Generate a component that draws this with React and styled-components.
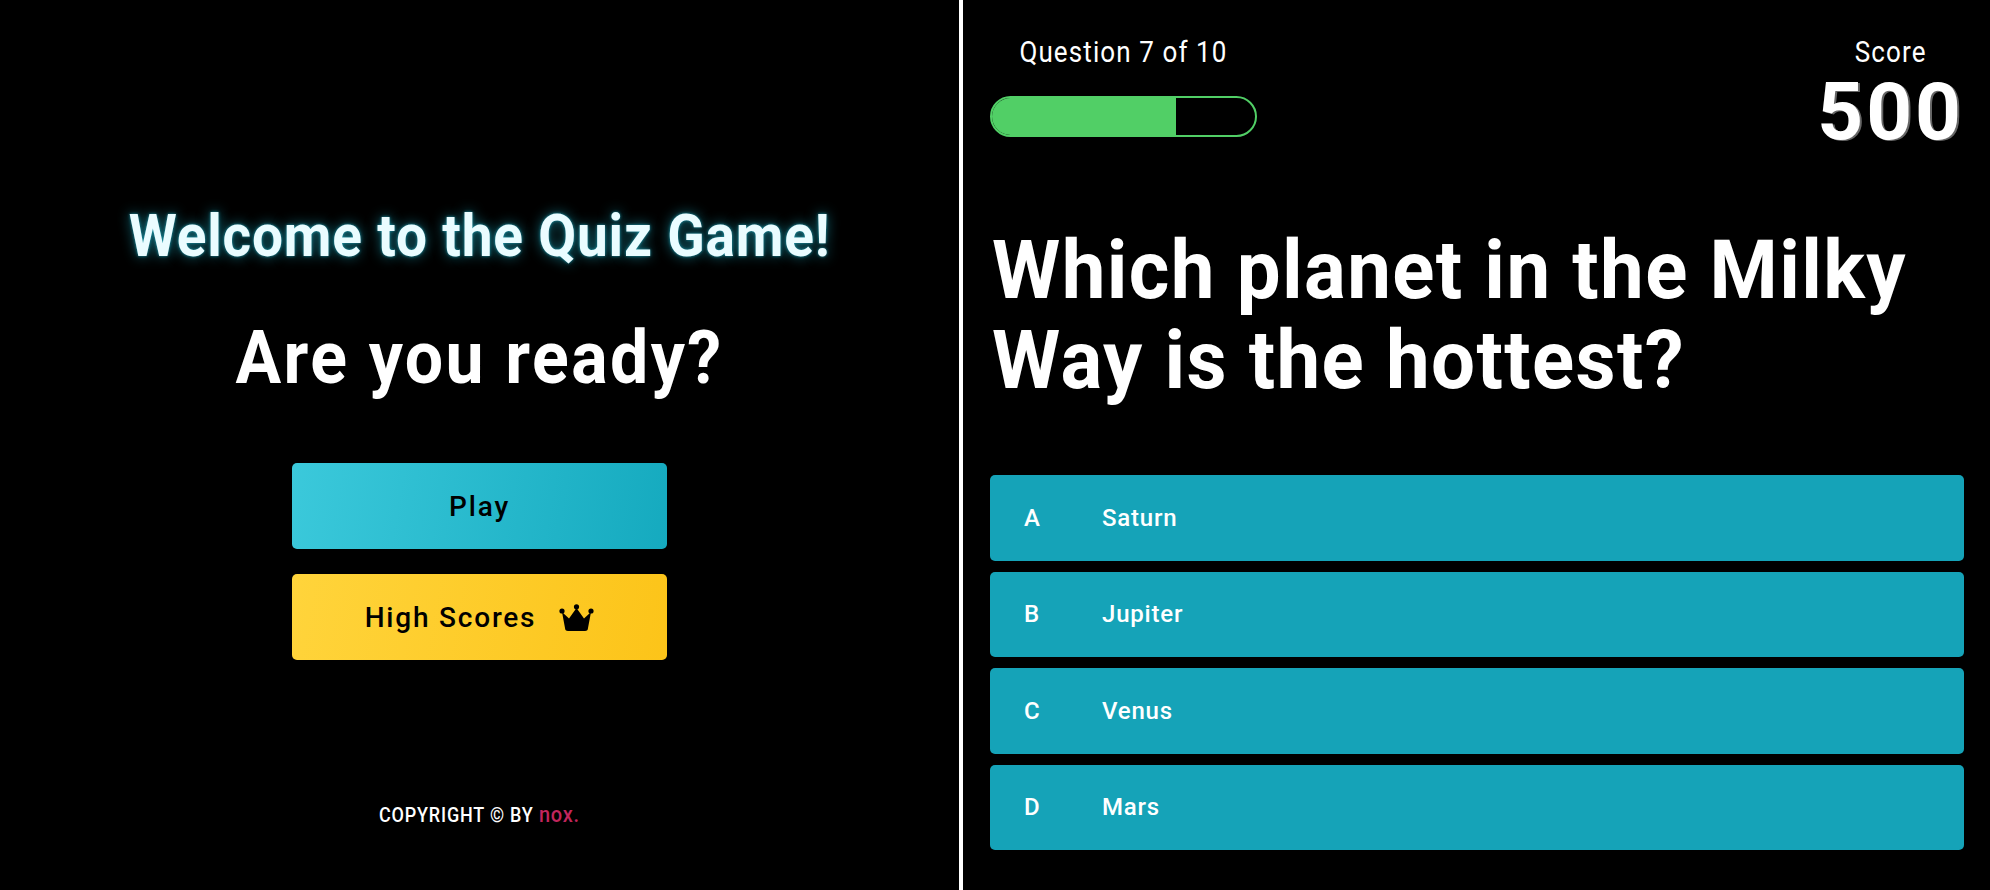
import React from "react";
import styled, { createGlobalStyle } from "styled-components";

const GlobalStyle = createGlobalStyle`
  * {
    box-sizing: border-box;
  }
  body {
    margin: 0;
    background: #000;
    color: #fff;
    font-family: Roboto, "Liberation Sans", sans-serif;
  }
`;

const Page = styled.div`
  display: grid;
  grid-template-columns: 959px 4px 1fr;
  width: 1990px;
  height: 890px;
  overflow: hidden;
`;

const Divider = styled.div`
  background: #fff;
`;

const Home = styled.section`
  display: flex;
  flex-direction: column;
  align-items: center;
  padding-top: 206px;
`;

const Welcome = styled.h1`
  margin: 0;
  font-size: 55px;
  line-height: 60px;
  font-weight: 700;
  letter-spacing: 0.8px;
  color: #eafcff;
  text-shadow: 0 0 3px rgba(34, 184, 207, 0.8), 0 0 12px rgba(34, 184, 207, 0.6);
  transform: scaleY(1.074);
`;

const Ready = styled.h2`
  margin: 52px 0 0;
  font-size: 68px;
  line-height: 80px;
  font-weight: 700;
  letter-spacing: 2.4px;
  transform: scaleY(1.096);
`;

const Menu = styled.div`
  display: flex;
  flex-direction: column;
  gap: 25px;
  width: 375px;
  margin-top: 65px;
`;

const MenuButton = styled.button`
  display: flex;
  align-items: center;
  justify-content: center;
  gap: 23px;
  height: 86px;
  border: 0;
  border-radius: 5px;
  color: #000;
  font-family: inherit;
  font-size: 28px;
  font-weight: 500;
  letter-spacing: 1.8px;
  background: ${(props) =>
    props.$gold
      ? "linear-gradient(100deg, #ffd43b, #fcc419)"
      : "linear-gradient(100deg, #3bc9db, #15aabf)"};
`;

const Crown = styled.svg`
  width: 35px;
  height: 27px;
  fill: #000;
`;

const Copyright = styled.footer`
  margin-top: 142px;
  font-size: 18px;
  line-height: 24px;
  font-weight: 500;
  letter-spacing: 0.8px;
  transform: scaleY(1.1);
`;

const Brand = styled.span`
  color: #c2255c;
  font-size: 20px;
`;

const Quiz = styled.section`
  display: flex;
  flex-direction: column;
  padding: 32px 26px 0 27px;
`;

const Header = styled.header`
  display: flex;
  justify-content: space-between;
`;

const Progress = styled.div`
  display: flex;
  flex-direction: column;
  align-items: center;
  width: 267px;
`;

const HeaderLabel = styled.div`
  margin: 2px 0;
  font-size: 26px;
  line-height: 36px;
  letter-spacing: 1.1px;
  transform: scaleY(1.13);
`;

const Track = styled.div`
  width: 100%;
  height: 41px;
  margin-top: 24px;
  border: 2px solid #51cf66;
  border-radius: 21px;
  overflow: hidden;
`;

const Fill = styled.div`
  height: 100%;
  background: #51cf66;
`;

const ScoreBox = styled.div`
  display: flex;
  flex-direction: column;
  align-items: center;
`;

const ScoreValue = styled.div`
  margin-top: 1px;
  font-size: 80px;
  line-height: 78px;
  font-weight: 700;
  letter-spacing: 3px;
  text-shadow: 2px 1px 0 #666;
`;

const Question = styled.h2`
  margin: 79px 0 0 2px;
  font-size: 78px;
  line-height: 86px;
  font-weight: 700;
  letter-spacing: 1.4px;
  transform: scaleY(1.046);
`;

const Options = styled.div`
  display: flex;
  flex-direction: column;
  gap: 10.75px;
  margin-top: 73px;
`;

const Option = styled.button`
  display: flex;
  align-items: center;
  height: 85.75px;
  padding: 0 0 0 34px;
  border: 0;
  border-radius: 5px;
  background: #15a3b8;
  color: #fff;
  font-family: inherit;
  font-size: 24px;
  font-weight: 500;
  letter-spacing: 0.8px;
`;

const OptionKey = styled.span`
  width: 78px;
  text-align: left;
`;

const options = [
  { key: "A", label: "Saturn" },
  { key: "B", label: "Jupiter" },
  { key: "C", label: "Venus" },
  { key: "D", label: "Mars" },
];

const App = () => {
  return (
    <Page>
      <GlobalStyle />
      <Home>
        <Welcome>Welcome to the Quiz Game!</Welcome>
        <Ready>Are you ready?</Ready>
        <Menu>
          <MenuButton>Play</MenuButton>
          <MenuButton $gold>
            High Scores
            <Crown viewBox="0 0 35 27">
              <circle cx="3" cy="7" r="2.6" />
              <circle cx="17.500" cy="2.800" r="2.600" />
              <circle cx="32" cy="7" r="2.600" />
              <path d="M3 8l7 6.500L17.500 4 25 14.500 32 8l-3 16a3 3 0 0 1-3 3H9a3 3 0 0 1-3-3z" />
            </Crown>
          </MenuButton>
        </Menu>
        <Copyright>
          COPYRIGHT © BY <Brand>nox.</Brand>
        </Copyright>
      </Home>
      <Divider />
      <Quiz>
        <Header>
          <Progress>
            <HeaderLabel>Question 7 of 10</HeaderLabel>
            <Track>
              <Fill style={{ width: `${(7 / 10) * 100}%` }} />
            </Track>
          </Progress>
          <ScoreBox>
            <HeaderLabel>Score</HeaderLabel>
            <ScoreValue>500</ScoreValue>
          </ScoreBox>
        </Header>
        <Question>Which planet in the Milky Way is the hottest?</Question>
        <Options>
          {options.map((option) => (
            <Option key={option.key}>
              <OptionKey>{option.key}</OptionKey>
              {option.label}
            </Option>
          ))}
        </Options>
      </Quiz>
    </Page>
  );
};

export default App;
